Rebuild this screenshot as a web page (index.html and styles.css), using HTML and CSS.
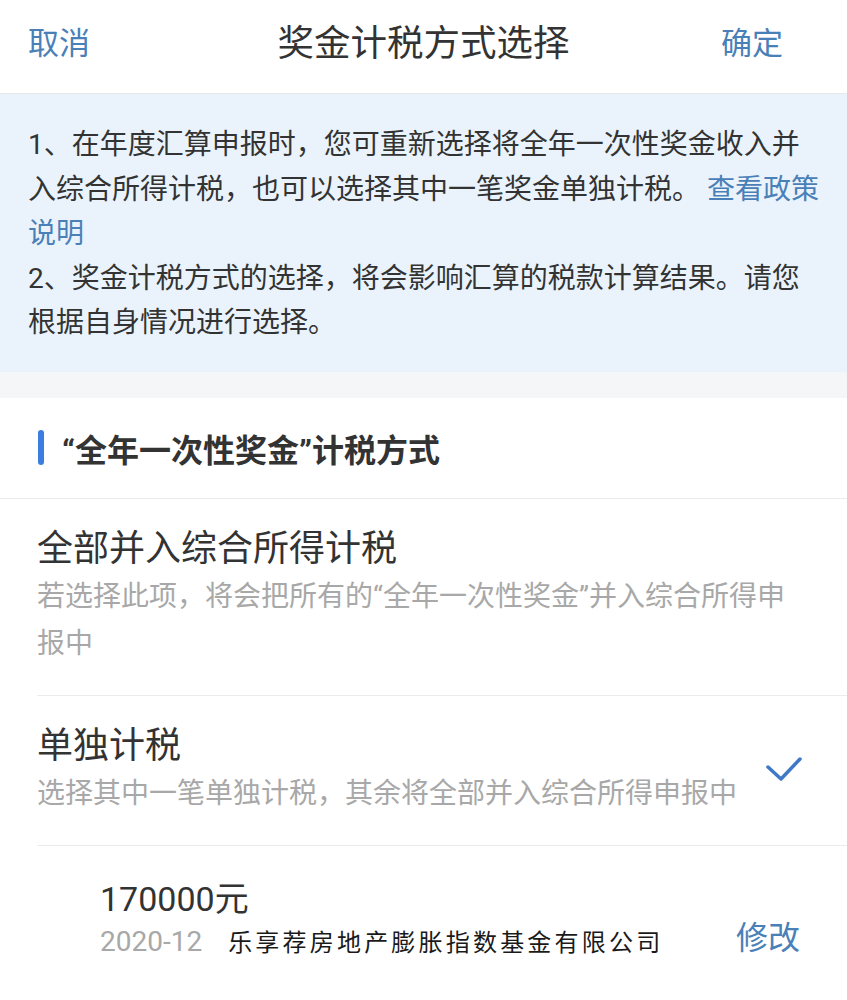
FILE: index.html
```html
<!DOCTYPE html>
<html lang="zh-CN">
<head>
  <meta charset="UTF-8" />
  <title>奖金计税方式选择</title>
  <meta name="viewport" content="width=device-width, initial-scale=1.0" />
  <link rel="stylesheet" href="styles.css">
</head>
<body>

<header class="topbar">
  <span class="nav-btn">取消</span>
  <h1>奖金计税方式选择</h1>
  <span class="nav-btn nav-right">确定</span>
</header>

<section class="notice">
  <p>1、在年度汇算申报时，您可重新选择将全年一次性奖金收入并入综合所得计税，也可以选择其中一笔奖金单独计税。 <a href="#">查看政策说明</a></p>
  <p>2、奖金计税方式的选择，将会影响汇算的税款计算结果。请您根据自身情况进行选择。</p>
</section>

<div class="gap"></div>

<section class="panel">
  <div class="panel-head">
    <i class="bar"></i>
    <h2>“全年一次性奖金”计税方式</h2>
  </div>

  <div class="option">
    <div class="option-text">
      <div class="option-title">全部并入综合所得计税</div>
      <div class="option-desc">若选择此项，将会把所有的“全年一次性奖金”并入综合所得申报中</div>
    </div>
  </div>

  <div class="option">
    <div class="option-text">
      <div class="option-title">单独计税</div>
      <div class="option-desc">选择其中一笔单独计税，其余将全部并入综合所得申报中</div>
    </div>
    <svg class="check" viewBox="0 0 40 28">
      <path d="M5 12 L18 24 L37 4" />
    </svg>
  </div>

  <div class="bonus">
    <div class="bonus-info">
      <div class="bonus-amount">170000元</div>
      <div class="bonus-meta"><span class="bonus-date">2020-12</span><span class="bonus-company">乐享荐房地产膨胀指数基金有限公司</span></div>
    </div>
    <a href="#" class="edit">修改</a>
  </div>
</section>

</body>
</html>
```

FILE: styles.css
```css
body {
  margin: 0;
  background: white;
  font-family: Roboto, "Noto Sans CJK SC", sans-serif;
  color: #333;
}
a { text-decoration: none; color: #4a80b8; }

.topbar {
  display: grid;
  grid-template-columns: 1fr auto 1fr;
  align-items: center;
  height: 94px;
  box-sizing: border-box;
  padding: 0 28px 12px 28px;
  border-bottom: 1px solid #e8e8e8;
}
.topbar h1 {
  margin: 0;
  font-size: 36.5px;
  font-weight: normal;
  color: #333;
}
.nav-btn { font-size: 31px; color: #4a80b8; }
.nav-right { justify-self: end; margin-right: 36px; }

.notice {
  background: #eaf3fc;
  padding: 29px 24px 26px 28px;
  font-size: 28px;
  line-height: 44.5px;
}
.notice p { margin: 0; }

.gap { height: 26px; background: #f5f6f8; }

.panel-head {
  display: flex;
  align-items: center;
  height: 100px;
  padding-left: 38px;
  border-bottom: 1px solid #ececec;
}
.bar {
  width: 6px;
  height: 35px;
  border-radius: 3px;
  background: #3b7ee0;
  margin-right: 18px;
}
.panel-head h2 { margin: 0; font-size: 32px; font-weight: bold; color: #333; }

.option {
  display: flex;
  align-items: center;
  margin-left: 37px;
  padding: 26px 44px 28px 0;
  border-bottom: 1px solid #ececec;
}
.option-text { flex: 1; }
.option-title { font-size: 36px; line-height: 48px; color: #333; }
.option-desc { font-size: 28px; line-height: 47px; color: #a8a8a8; }
.check {
  width: 40px;
  height: 28px;
  fill: none;
  stroke: #3f78c8;
  stroke-width: 3.5;
  stroke-linecap: round;
  stroke-linejoin: round;
}

.bonus {
  display: flex;
  align-items: flex-end;
  padding: 30px 47px 0 100px;
}
.bonus-info { flex: 1; }
.bonus-amount { font-size: 34px; line-height: 46px; color: #333; }
.bonus-meta { font-size: 28px; line-height: 40px; }
.bonus-date { color: #a8a8a8; }
.bonus-company {
  margin-left: 26px;
  font-size: 24px;
  letter-spacing: 3.2px;
  color: #1a1a1a;
}
.edit { font-size: 32px; line-height: 40px; margin-bottom: 5px; }
```
